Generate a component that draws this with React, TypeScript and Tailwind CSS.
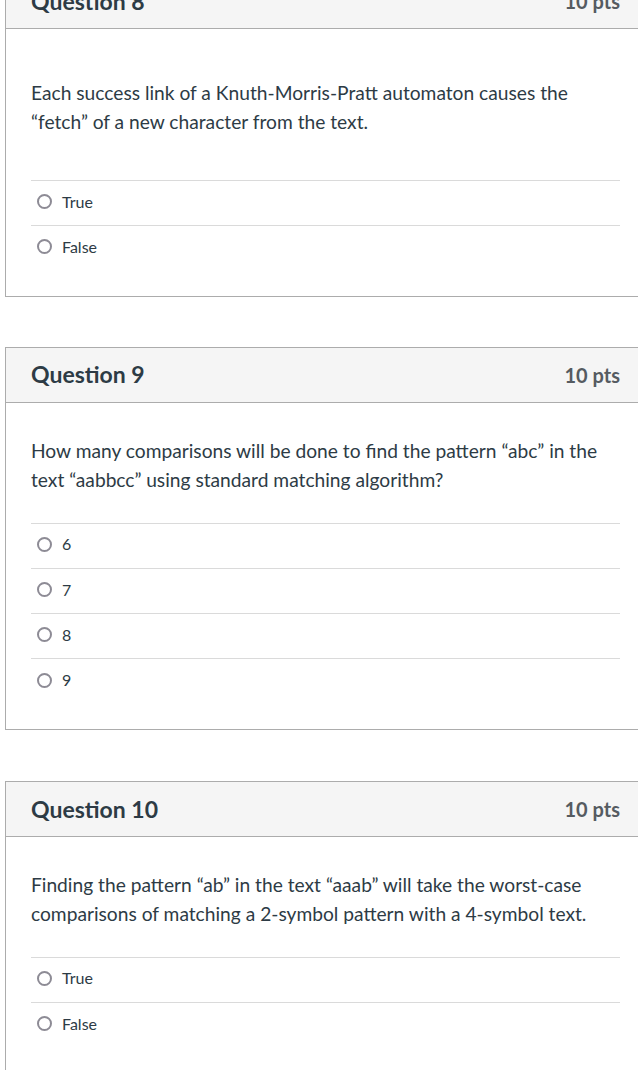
const questions = [
  {
    title: "Question 8",
    pts: "10 pts",
    text: ["Each success link of a Knuth-Morris-Pratt automaton causes the", "“fetch” of a new character from the text."],
    answers: ["True", "False"],
    first: true,
  },
  {
    title: "Question 9",
    pts: "10 pts",
    text: ["How many comparisons will be done to find the pattern “abc” in the", "text “aabbcc” using standard matching algorithm?"],
    answers: ["6", "7", "8", "9"],
  },
  {
    title: "Question 10",
    pts: "10 pts",
    text: ["Finding the pattern “ab” in the text “aaab” will take the worst-case", "comparisons of matching a 2-symbol pattern with a 4-symbol text."],
    answers: ["True", "False"],
  },
];

function Radio() {
  return <span className="w-[15px] h-[15px] rounded-full border-2 border-[#8d8b95] bg-white shrink-0" />;
}

export default function App() {
  return (
    <div
      className="w-[638px] h-[1070px] overflow-hidden bg-white text-[#2d3b45]"
      style={{ fontFamily: "Lato, 'Open Sans', sans-serif" }}
    >
      {questions.map((q, i) => (
        <div
          key={i}
          className={`ml-[5px] w-[645px] border border-[#acacac] ${q.first ? "-mt-[27px]" : i === 1 ? "mt-[50px]" : "mt-[51px]"}`}
        >
          <div className="h-[55px] bg-[#f5f5f5] border-b border-[#acacac] flex items-center justify-between pl-[25px] pr-[29px]">
            <span className="text-[23px] font-bold text-[#2d3b45]">{q.title}</span>
            <span className="text-[20px] font-bold text-[#555b61]">{q.pts}</span>
          </div>
          <div className="pl-[25px] pr-[29px]">
            <div className={`text-[19.2px] leading-[29px] ${q.first ? "pt-[49px] pb-[44px]" : "pt-[33px] pb-[29px]"}`}>
              {q.text.map((t, j) => (
                <div key={j}>{t}</div>
              ))}
            </div>
            <div className="pb-[25px]">
              {q.answers.map((a, j) => (
                <div key={j} className="h-[45.3px] border-t border-[#dadada] flex items-center gap-[10px] pl-[6px] pb-[3px]">
                  <Radio />
                  <span className="text-[16px] text-[#2d3b45]">{a}</span>
                </div>
              ))}
            </div>
          </div>
        </div>
      ))}
    </div>
  );
}
